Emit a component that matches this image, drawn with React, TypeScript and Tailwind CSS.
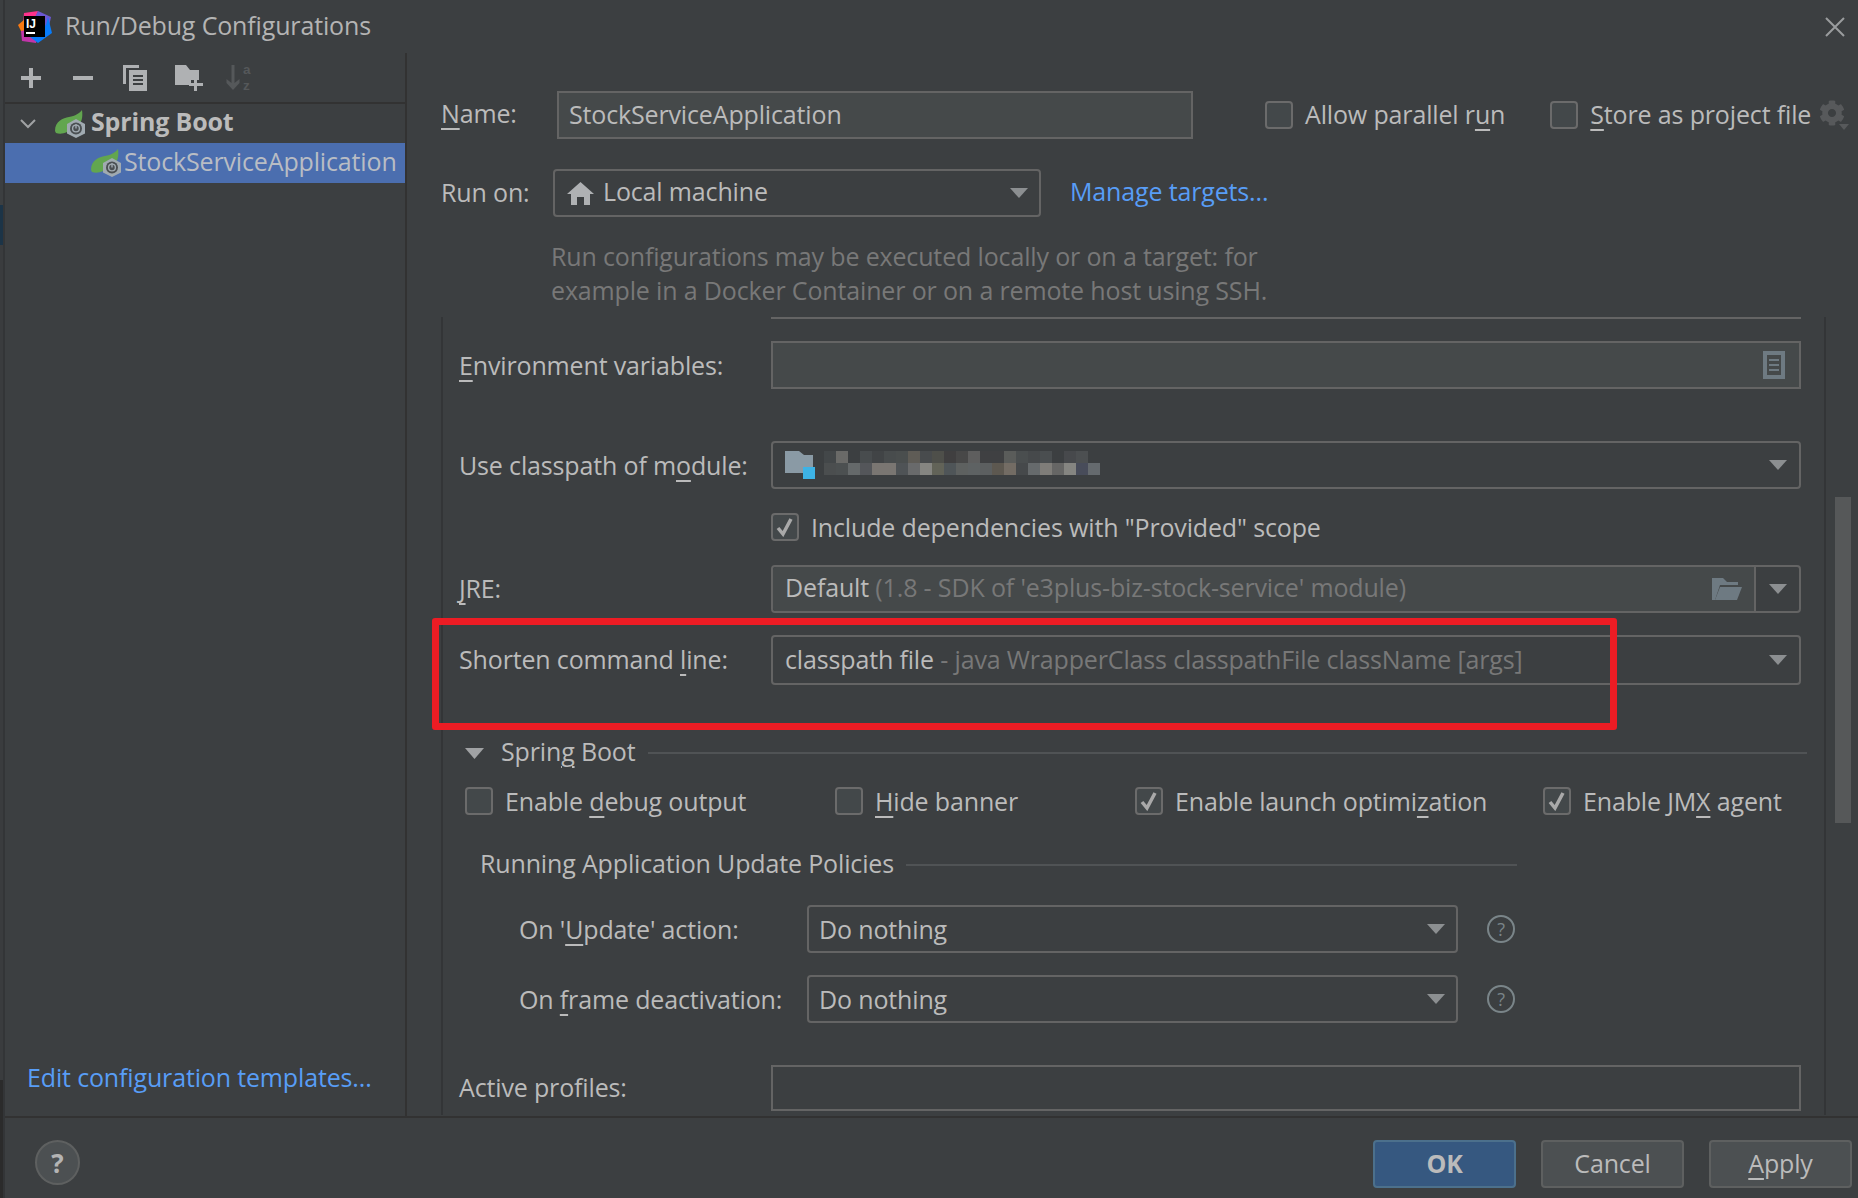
import type { ReactNode } from "react";
import { FaCog } from "react-icons/fa";

const row1 = ["#434749", "#6a6a68", "", "#484c4e", "#414446", "#484c4d", "#4a4e4e", "#5f5c56", "#484b4d", "#4e4f4a", "#403f40", "#484848", "#5e5e5e", "#3f4042", "#3f4042", "#5a5c5a", "#4a4e4f", "#46494b", "#4a4e50", "", "#47494c", "#4c4f51"];
const row2 = ["#4b4e4f", "#4c5051", "#65696a", "#54565a", "#7a7672", "#7a7672", "#4f5356", "#696a6b", "#858581", "#626358", "#4f5558", "#5e6160", "#5e6263", "#5c5f60", "#5d5850", "#736c64", "#46494b", "#666a6c", "#7f7d79", "#666665", "#858581", "#484c5a", "#656a6e"];

function Arrow() {
  return (
    <svg width="18" height="10" viewBox="0 0 18 10" className="shrink-0">
      <polygon points="0,0 18,0 9,10" fill="#8c8f91" />
    </svg>
  );
}

function Check({ on = false }: { on?: boolean }) {
  return (
    <div className="w-[28px] h-[28px] shrink-0 rounded-[4px] border-2 border-[#6b6b6b] bg-[#43484a] flex items-center justify-center">
      {on && (
        <svg width="18" height="20" viewBox="0 0 18 20">
          <path d="M2 11 L7 17 L15 2" fill="none" stroke="#a9a9a9" strokeWidth="3.5" />
        </svg>
      )}
    </div>
  );
}

function U({ children }: { children: ReactNode }) {
  return <span className="underline decoration-2 underline-offset-[5px]">{children}</span>;
}

function Help() {
  return (
    <div className="w-[28px] h-[28px] ml-[29px] rounded-full border-2 border-[#7a8589] text-[#7a8589] text-[18px] leading-none flex items-center justify-center">
      ?
    </div>
  );
}

function SpringIcon() {
  return (
    <svg width="30" height="28" viewBox="0 0 30 28" className="shrink-0">
      <path d="M0 21 C0 11 8 8 14 7 C20 6 25 3 27 0 C28 7 27 13 22 16 L12 22 C8 24 4 24 1 23 Z" fill="#62a64f" />
      <polygon points="21,9 30,14 30,23.5 21,28 12,23.5 12,14" fill="#a0aab1" />
      <circle cx="21" cy="18.5" r="6" fill="#4a4f52" />
      <circle cx="21" cy="18.5" r="3.4" fill="none" stroke="#a0aab1" strokeWidth="1.4" />
      <rect x="20.3" y="14" width="1.4" height="4.5" fill="#a0aab1" />
    </svg>
  );
}

function Logo() {
  return (
    <svg width="34" height="32" viewBox="0 0 34 32" className="shrink-0">
      <polygon points="6,2 20,0 14,16 5,14" fill="#ff318c" />
      <polygon points="0,14 7,8 12,20 4,22" fill="#f97a12" />
      <polygon points="3,20 22,16 18,32 4,30" fill="#c135a9" />
      <polygon points="20,0 33,6 30,20 14,12" fill="#6b57d2" />
      <polygon points="30,6 34,22 20,32 12,26 28,14" fill="#087cfa" />
      <rect x="6" y="5" width="21" height="21" fill="#000" />
      <text x="8" y="17" fontFamily="'Liberation Sans', sans-serif" fontWeight="700" fontSize="12" fill="#fff">IJ</text>
      <rect x="8" y="21" width="9" height="2" fill="#fff" />
    </svg>
  );
}

function Combo({ className, children }: { className: string; children: ReactNode }) {
  return (
    <div className={`flex items-center justify-between rounded-[4px] border-2 border-[#646464] ${className}`}>
      {children}
      <Arrow />
    </div>
  );
}

function CheckItem({ on, className = "", children }: { on?: boolean; className?: string; children: ReactNode }) {
  return (
    <div className={`flex items-center gap-[12px] whitespace-nowrap ${className}`}>
      <Check on={on} />
      <span>{children}</span>
    </div>
  );
}

function Button({ className, children }: { className: string; children: ReactNode }) {
  return (
    <div className={`w-[143px] h-[48px] rounded-[4px] border-2 flex items-center justify-center ${className}`}>
      {children}
    </div>
  );
}

export default function App() {
  return (
    <div className="relative w-[1858px] h-[1198px] flex bg-[#3c3f41] text-[#bbbbbb] text-[25px] tracking-[-0.15px] overflow-hidden font-['Open_Sans',sans-serif]">
      <div className="w-[5px] shrink-0 flex flex-col border-r-2 border-[#333537]">
        <div className="h-[205px] bg-[#3c3f41]" />
        <div className="h-[40px] bg-[#1c3447]" />
        <div className="flex-1 bg-[#3a3c3e]" />
        <div className="h-[118px] bg-[#2b2b2b]" />
      </div>

      <div className="flex-1 flex flex-col min-w-0">
        <div className="h-[53px] shrink-0 flex items-center pl-[13px] pr-[13px]">
          <Logo />
          <span className="ml-[13px] text-[#b4b4b4] -mt-[2px]">Run/Debug Configurations</span>
          <svg width="20" height="20" viewBox="0 0 20 20" className="ml-auto">
            <path d="M1 1 L19 19 M19 1 L1 19" stroke="#9a9c9e" strokeWidth="2" />
          </svg>
        </div>

        <div className="h-[1063px] shrink-0 flex">
          <aside className="w-[402px] shrink-0 flex flex-col border-r-2 border-[#323232]">
            <div className="h-[51px] shrink-0 flex items-center pl-[16px] border-b-2 border-[#323232]">
              <svg width="20" height="20" viewBox="0 0 20 20"><path d="M8 0h4v8h8v4h-8v8H8v-8H0V8h8z" fill="#afb1b3" /></svg>
              <svg width="20" height="20" viewBox="0 0 20 20" className="ml-[32px]"><rect y="8" width="20" height="4" fill="#afb1b3" /></svg>
              <svg width="24" height="26" viewBox="0 0 24 26" className="ml-[30px]">
                <path d="M0 0h16v3H3v16H0z" fill="#afb1b3" />
                <path d="M6 5h18v21H6z" fill="#afb1b3" />
                <path d="M10 10h10v2H10zM10 14h10v2H10zM10 18h10v2H10z" fill="#3c3f41" />
              </svg>
              <svg width="28" height="26" viewBox="0 0 28 26" className="ml-[28px]">
                <path d="M0 0h11l4 5h9v10h-8v5H0z" fill="#afb1b3" />
                <path d="M19 14h3v4h6v3h-6v5h-3v-5h-5v-3h5z" fill="#afb1b3" />
              </svg>
              <div className="ml-[22px] flex items-center text-[#55585a]">
                <svg width="16" height="26" viewBox="0 0 16 26">
                  <path d="M6.5 0h3v18l5-4v4l-6.5 7L1.5 18v-4l5 4z" fill="#55585a" />
                </svg>
                <span className="flex flex-col ml-[2px] text-[13.5px] leading-[16px] font-bold tracking-normal font-['Liberation_Sans',sans-serif]">
                  <span>a</span>
                  <span>z</span>
                </span>
              </div>
            </div>
            <div className="h-[39px] shrink-0 flex items-center pl-[15px]">
              <svg width="16" height="10" viewBox="0 0 16 10"><path d="M1 1l7 7 7-7" fill="none" stroke="#a0a2a4" strokeWidth="2" /></svg>
              <div className="ml-[19px]"><SpringIcon /></div>
              <span className="ml-[6px] font-bold -mt-[3px]">Spring Boot</span>
            </div>
            <div className="h-[40px] shrink-0 flex items-center pl-[86px] bg-[#4b6eaf]">
              <SpringIcon />
              <span className="ml-[3px] text-[#b9bdc4] -mt-[2px]">StockServiceApplication</span>
            </div>
            <div className="mt-auto mb-[21px] h-[34px] flex items-center pl-[22px] text-[#589df6]">Edit configuration templates...</div>
          </aside>

          <main className="flex-1 flex flex-col min-w-0">
            <div className="h-[264px] shrink-0 pl-[34px]">
              <div className="h-[48px] mt-[38px] flex items-center">
                <span className="w-[116px] shrink-0 -mt-[2px]"><U>N</U>ame:</span>
                <div className="w-[636px] h-[48px] shrink-0 flex items-center pl-[10px] border-2 border-[#646464] bg-[#45494a]">StockServiceApplication</div>
                <CheckItem className="ml-[72px]">Allow parallel r<U>u</U>n</CheckItem>
                <CheckItem className="ml-[45px]"><U>S</U>tore as project file</CheckItem>
                <div className="relative ml-[8px] w-[30px] h-[30px]">
                  <FaCog className="w-[26px] h-[26px] text-[#57595b]" />
                  <svg width="10" height="6" viewBox="0 0 10 6" className="absolute right-0 bottom-0">
                    <polygon points="0,0 10,0 5,6" fill="#57595b" />
                  </svg>
                </div>
              </div>
              <div className="h-[48px] mt-[30px] flex items-center">
                <span className="w-[112px] shrink-0">Run on:</span>
                <Combo className="w-[488px] h-[48px] shrink-0 pl-[12px] pr-[11px]">
                  <span className="flex items-center">
                    <svg width="27" height="23" viewBox="0 0 27 23" className="mr-[9px]">
                      <path d="M13.5 0L27 12h-4v11h-6v-8h-7v8H4V12H0z" fill="#afb1b3" />
                    </svg>
                    <span className="-mt-[2px]">Local machine</span>
                  </span>
                </Combo>
                <span className="ml-[29px] text-[#589df6] -mt-[2px]">Manage targets...</span>
              </div>
              <div className="mt-[22px] pl-[110px] text-[#787878] leading-[34px] whitespace-nowrap">
                <div>Run configurations may be executed locally or on a target: for</div>
                <div>example in a Docker Container or on a remote host using SSH.</div>
              </div>
            </div>

            <div className="h-[798px] shrink-0 flex">
              <div className="ml-[34px] w-[1385px] shrink-0 border-l-2 border-r-2 border-[#333537]">
                <div className="ml-[328px] mr-[23px] h-[2px] bg-[#646464]" />

                <div className="h-[48px] mt-[22px] flex items-center pl-[16px]">
                  <span className="w-[312px] shrink-0 mt-[2px]"><U>E</U>nvironment variables:</span>
                  <div className="w-[1030px] h-[48px] flex items-center justify-end pr-[14px] border-2 border-[#646464] bg-[#45494a]">
                    <svg width="22" height="28" viewBox="0 0 22 28">
                      <path d="M0 0h22v28H0zM4 4v20h14V4z" fill="#6e7a82" fillRule="evenodd" />
                      <path d="M6 8h10v2H6zM6 13h10v2H6zM6 18h10v2H6z" fill="#6e7a82" />
                    </svg>
                  </div>
                </div>

                <div className="h-[48px] mt-[52px] flex items-center pl-[16px]">
                  <span className="w-[312px] shrink-0 mt-[2px]">Use classpath of m<U>o</U>dule:</span>
                  <Combo className="w-[1030px] h-[48px] pl-[12px] pr-[12px]">
                    <span className="flex items-start">
                      <svg width="30" height="28" viewBox="0 0 30 28" className="shrink-0">
                        <path d="M0 0h14l5 4h9v18H0z" fill="#8a9aa5" />
                        <rect x="18" y="16" width="12" height="12" fill="#3db3e6" />
                      </svg>
                      <span className="flex flex-col ml-[9px]">
                        <span className="flex">{row1.map((c, i) => <span key={i} className="w-[12px] h-[12px]" style={{ backgroundColor: c || "transparent" }} />)}</span>
                        <span className="flex">{row2.map((c, i) => <span key={i} className="w-[12px] h-[12px]" style={{ backgroundColor: c }} />)}</span>
                      </span>
                    </span>
                  </Combo>
                </div>

                <CheckItem on className="h-[28px] mt-[24px] ml-[328px]"><span className="relative top-[1px]">Include dependencies with "Provided" scope</span></CheckItem>

                <div className="h-[48px] mt-[24px] flex items-center pl-[16px]">
                  <span className="w-[312px] shrink-0"><U>J</U>RE:</span>
                  <div className="w-[1030px] h-[48px] flex rounded-[4px] border-2 border-[#646464]">
                    <div className="w-[983px] flex items-center justify-between pl-[12px] pr-[12px] bg-[#45494a] border-r-2 border-[#646464] rounded-l-[3px]">
                      <span className="-mt-[2px]">Default <span className="text-[#787878]">(1.8 - SDK of 'e3plus-biz-stock-service' module)</span></span>
                      <svg width="30" height="22" viewBox="0 0 30 22">
                        <path d="M0 0h11l4 4h11v3H8L3 22H0z" fill="#6e7a82" />
                        <path d="M8 9h22l-5 13H3z" fill="#6e7a82" />
                      </svg>
                    </div>
                    <div className="flex-1 flex items-center justify-center"><Arrow /></div>
                  </div>
                </div>

                <div className="h-[50px] mt-[22px] flex items-center pl-[16px]">
                  <span className="w-[312px] shrink-0">Shorten command <U>l</U>ine:</span>
                  <Combo className="w-[1030px] h-[50px] pl-[12px] pr-[12px]">
                    <span>classpath file <span className="text-[#787878]">- java WrapperClass classpathFile className [args]</span></span>
                  </Combo>
                </div>

                <div className="w-[1364px] h-[24px] mt-[56px] flex items-center pl-[22px]">
                  <svg width="19" height="11" viewBox="0 0 19 11"><polygon points="0,0 19,0 9.5,11" fill="#a0a2a4" /></svg>
                  <span className="ml-[17px] -mt-[2px]">Sprin<U>g</U> Boot</span>
                  <div className="ml-[13px] flex-1 h-[2px] bg-[#505355]" />
                </div>

                <div className="h-[28px] mt-[22px] flex items-center pl-[22px]">
                  <CheckItem className="w-[370px]"><span className="relative top-[1px]">Enable <U>d</U>ebug output</span></CheckItem>
                  <CheckItem className="w-[300px]"><span className="relative top-[1px]"><U>H</U>ide banner</span></CheckItem>
                  <CheckItem on className="w-[408px]"><span className="relative top-[1px]">Enable launch optimi<U>z</U>ation</span></CheckItem>
                  <CheckItem on><span className="relative top-[1px]">Enable JM<U>X</U> agent</span></CheckItem>
                </div>

                <div className="w-[1074px] h-[24px] mt-[38px] flex items-center pl-[37px]">
                  <span className="whitespace-nowrap -mt-[2px]">Running Application Update Policies</span>
                  <div className="ml-[12px] flex-1 h-[2px] bg-[#505355]" />
                </div>

                <div className="h-[48px] mt-[28px] flex items-center pl-[76px]">
                  <span className="w-[288px] shrink-0 mt-[2px]">On '<U>U</U>pdate' action:</span>
                  <Combo className="w-[651px] h-[48px] pl-[10px] pr-[11px]"><span className="mt-[2px]">Do nothing</span></Combo>
                  <Help />
                </div>

                <div className="h-[48px] mt-[22px] flex items-center pl-[76px]">
                  <span className="w-[288px] shrink-0 mt-[2px]">On <U>f</U>rame deactivation:</span>
                  <Combo className="w-[651px] h-[48px] pl-[10px] pr-[11px]"><span className="mt-[2px]">Do nothing</span></Combo>
                  <Help />
                </div>

                <div className="h-[46px] mt-[42px] flex items-center pl-[16px]">
                  <span className="w-[312px] shrink-0">Active profiles:</span>
                  <div className="w-[1030px] h-[46px] border-2 border-[#646464]" />
                </div>
              </div>

              <div className="flex-1 pl-[9px] pt-[180px]">
                <div className="w-[16px] h-[326px] bg-[#565859]" />
              </div>
            </div>
          </main>
        </div>

        <footer className="flex-1 flex justify-between pt-[22px] pl-[30px] pr-[6px] border-t-2 border-[#323232]">
          <div className="w-[45px] h-[45px] rounded-full border-2 border-[#5e6060] bg-[#4c5052] flex items-center justify-center font-bold text-[26px] leading-none text-[#b4b4b4]">?</div>
          <div className="flex gap-[25px]">
            <Button className="bg-[#365880] border-[#4c708c] font-bold">OK</Button>
            <Button className="bg-[#4c5052] border-[#5e6060]">Cancel</Button>
            <Button className="bg-[#4c5052] border-[#5e6060]"><span><U>A</U>pply</span></Button>
          </div>
        </footer>
      </div>

      <div className="absolute left-[432px] top-[618px] w-[1185px] h-[112px] rounded-[3px] border-[7px] border-[#ed1c24]" />
    </div>
  );
}
